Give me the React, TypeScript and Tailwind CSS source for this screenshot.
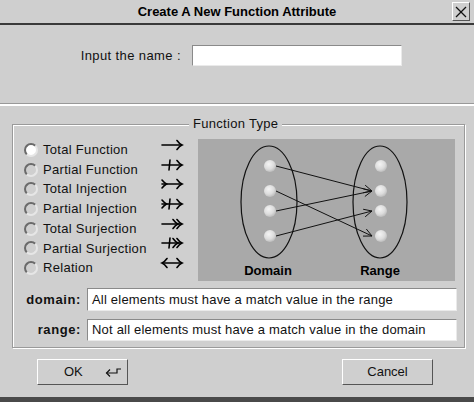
import React from 'react'

const font = { fontFamily: '"Liberation Sans", Arial, sans-serif' }

const types = [
  'Total Function',
  'Partial Function',
  'Total Injection',
  'Partial Injection',
  'Total Surjection',
  'Partial Surjection',
  'Relation',
]

// arrow glyph pieces: bar = vertical stroke, tail = ">" at start, heads = number of heads at end, back = head at start
const glyphs = [
  { bar: false, tail: false, heads: 1, back: false },
  { bar: true, tail: false, heads: 1, back: false },
  { bar: false, tail: true, heads: 1, back: false },
  { bar: true, tail: true, heads: 1, back: false },
  { bar: false, tail: false, heads: 2, back: false },
  { bar: true, tail: false, heads: 2, back: false },
  { bar: false, tail: false, heads: 1, back: true },
]

function Glyph({ bar, tail, heads, back }: { bar: boolean; tail: boolean; heads: number; back: boolean }) {
  return (
    <svg width="24" height="14" viewBox="0 0 24 14" fill="none" stroke="#000" strokeWidth="1.6" strokeLinecap="round">
      <line x1={back ? 3 : 2} y1="7" x2="21.5" y2="7" />
      <path d="M17 2.5 Q19.5 6 22 7 Q19.5 8 17 11.5" />
      {heads === 2 && <path d="M13 2.5 Q15.5 6 18 7 Q15.5 8 13 11.5" />}
      {tail && <path d="M2 3 Q4.5 6 6.5 7 Q4.5 8 2 11" />}
      {back && <path d="M7 2.5 Q4.5 6 2 7 Q4.5 8 7 11.5" />}
      {bar && <line x1="10" y1="2" x2="9" y2="12" />}
    </svg>
  )
}

function Radio({ checked }: { checked?: boolean }) {
  return (
    <span
      className={`inline-block h-[14px] w-[14px] rounded-full border-2 border-t-[#6a6a6a] border-l-[#6a6a6a] border-b-[#e6e6e6] border-r-[#e6e6e6] ${
        checked ? 'bg-white' : 'bg-[#cfcfcf]'
      }`}
    />
  )
}

function Diagram() {
  const ys = [27, 52, 72, 97]
  const links: [number, number][] = [
    [0, 1],
    [1, 3],
    [2, 1],
    [3, 2],
  ]
  return (
    <svg width="257" height="142" viewBox="0 0 257 142">
      <defs>
        <radialGradient id="dot" cx="0.4" cy="0.35" r="0.7">
          <stop offset="0" stopColor="#f4f4f4" />
          <stop offset="0.6" stopColor="#dcdcdc" />
          <stop offset="1" stopColor="#b8b8b8" />
        </radialGradient>
      </defs>
      <rect width="257" height="142" fill="#a9a9a9" />
      <ellipse cx="71" cy="63" rx="28" ry="56" fill="none" stroke="#111" strokeWidth="1.2" />
      <ellipse cx="182" cy="63" rx="27" ry="56" fill="none" stroke="#111" strokeWidth="1.2" />
      {links.map(([a, b], i) => {
        const x1 = 78
        const y1 = ys[a]
        const x2 = 174
        const y2 = ys[b]
        const ang = Math.atan2(y2 - y1, x2 - x1)
        const l = 9
        const p1 = [x2 - l * Math.cos(ang - 0.45), y2 - l * Math.sin(ang - 0.45)]
        const p2 = [x2 - l * Math.cos(ang + 0.45), y2 - l * Math.sin(ang + 0.45)]
        return (
          <g key={i} stroke="#111" strokeWidth="1" fill="none">
            <line x1={x1} y1={y1} x2={x2} y2={y2} />
            <polyline points={`${p1[0]},${p1[1]} ${x2},${y2} ${p2[0]},${p2[1]}`} />
          </g>
        )
      })}
      {ys.map((y, i) => (
        <g key={i}>
          <circle cx="72" cy={y} r="6" fill="url(#dot)" />
          <circle cx="183" cy={y} r="6" fill="url(#dot)" />
        </g>
      ))}
      <text x="70" y="136" textAnchor="middle" fontSize="13" fontWeight="bold" fill="#000" style={font}>
        Domain
      </text>
      <text x="182" y="136" textAnchor="middle" fontSize="13" fontWeight="bold" fill="#000" style={font}>
        Range
      </text>
    </svg>
  )
}

export default function App() {
  return (
    <div className="flex h-[402px] w-[474px] flex-col bg-[#cfcfcf] text-[13px] text-[#111]" style={font}>
      {/* title bar */}
      <div className="grid h-[25px] grid-cols-[1fr_auto_1fr] items-center border-b-2 border-[#3a3a3a]">
        <div />
        <div className="text-[13px] font-bold text-black">Create A New Function Attribute</div>
        <div className="flex justify-end pr-[4px]">
          <div className="flex h-[19px] w-[18px] items-center justify-center border border-t-white border-l-white border-b-[#555] border-r-[#555]">
            <svg width="12" height="12" viewBox="0 0 12 12" stroke="#111" strokeWidth="1.2">
              <line x1="1" y1="1" x2="11" y2="11" />
              <line x1="11" y1="1" x2="1" y2="11" />
            </svg>
          </div>
        </div>
      </div>

      {/* name input */}
      <div className="mt-[20px] flex items-center">
        <div className="w-[181px] text-right tracking-[0.4px]">Input the name :</div>
        <div className="ml-[11px] h-[21px] w-[210px] border border-t-[#8a8a8a] border-l-[#8a8a8a] border-b-[#eaeaea] border-r-[#eaeaea] bg-white" />
      </div>

      <div className="mt-[37px] border-t border-b-2 border-t-[#999] border-b-white" />

      {/* function type group */}
      <div className="ml-[12px] mt-[18px] w-[453px] border border-[#9a9a9a] shadow-[inset_1px_1px_0_#fff,1px_1px_0_#fff]">
        <div className="-mt-[9px] ml-[176px] w-fit bg-[#cfcfcf] px-[4px] leading-[16px] tracking-[0.3px]">Function Type</div>
        <div className="mt-[7px] flex">
          <div className="flex w-[134px] flex-col pl-[11px] pt-[1px]">
            {types.map((t, i) => (
              <div key={t} className="flex h-[19.7px] items-center gap-[5px] tracking-[0.3px]">
                <Radio checked={i === 0} />
                <span>{t}</span>
              </div>
            ))}
          </div>
          <div className="-mt-[4px] flex w-[40px] flex-col pl-[13px]">
            {glyphs.map((g, i) => (
              <div key={i} className="flex h-[19.7px] items-center">
                <Glyph {...g} />
              </div>
            ))}
          </div>
          <div className="ml-[11px]">
            <Diagram />
          </div>
        </div>

        <div className="mt-[7px] flex items-center">
          <div className="w-[68px] text-right font-bold tracking-[0.6px]">domain:</div>
          <div className="ml-[6px] flex h-[23px] w-[370px] items-center border border-t-[#8a8a8a] border-l-[#8a8a8a] border-b-[#eaeaea] border-r-[#eaeaea] bg-white pl-[4px] tracking-[0.2px]">
            All elements must have a match value in the range
          </div>
        </div>
        <div className="mb-[6px] mt-[8px] flex items-center">
          <div className="w-[68px] text-right font-bold tracking-[0.6px]">range:</div>
          <div className="ml-[6px] flex h-[22px] w-[370px] items-center border border-t-[#8a8a8a] border-l-[#8a8a8a] border-b-[#eaeaea] border-r-[#eaeaea] bg-white pl-[4px] tracking-[0.2px]">
            Not all elements must have a match value in the domain
          </div>
        </div>
      </div>

      {/* buttons */}
      <div className="mt-[11px] flex">
        <button className="ml-[37px] flex h-[26px] w-[91px] items-center border border-t-white border-l-white border-b-[#555] border-r-[#555] pl-[26px]">
          <span>OK</span>
          <svg className="ml-[22px]" width="18" height="11" viewBox="0 0 18 11" fill="none" stroke="#111" strokeWidth="1.2">
            <polyline points="5,2.5 1.5,6 5,9.5" />
            <polyline points="1.5,6 12,6 12,2 16,2" />
          </svg>
        </button>
        <button className="ml-[214px] flex h-[26px] w-[91px] items-center justify-center border border-t-white border-l-white border-b-[#555] border-r-[#555]">
          Cancel
        </button>
      </div>

      <div className="flex-1" />
      <div className="h-[5px] bg-[#4a4a4a]" />
    </div>
  )
}
